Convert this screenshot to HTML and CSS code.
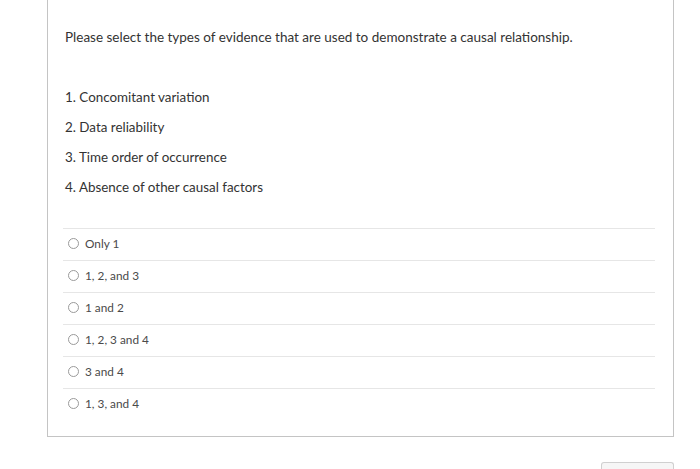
FILE: index.html
```html
<!DOCTYPE html>
<html>
<head>
<meta charset="utf-8">
<link rel="stylesheet" href="styles.css">
</head>
<body>
<div class="panel">
  <p class="question">Please select the types of evidence that are used to demonstrate a causal relationship.</p>
  <ol class="items">
    <li>1. Concomitant variation</li>
    <li>2. Data reliability</li>
    <li>3. Time order of occurrence</li>
    <li>4. Absence of other causal factors</li>
  </ol>
  <div class="options">
    <label class="option"><span class="radio"></span><span>Only 1</span></label>
    <label class="option"><span class="radio"></span><span>1, 2, and 3</span></label>
    <label class="option"><span class="radio"></span><span>1 and 2</span></label>
    <label class="option"><span class="radio"></span><span>1, 2, 3 and 4</span></label>
    <label class="option"><span class="radio"></span><span>3 and 4</span></label>
    <label class="option"><span class="radio"></span><span>1, 3, and 4</span></label>
  </div>
</div>
<div class="footer">
  <div class="btn"></div>
</div>
</body>
</html>
```
FILE: styles.css
```css
html, body {
  margin: 0;
  padding: 0;
  background: #fff;
  font-family: Lato, "Liberation Sans", sans-serif;
  color: #333;
  overflow: hidden;
}
.panel {
  box-sizing: border-box;
  margin-left: 47px;
  width: 627px;
  height: 437px;
  border: 1px solid #c4c4c4;
  border-top: none;
  padding: 28px 17px 0 17px;
}
.question {
  margin: 0;
  font-size: 13.5px;
  line-height: 18px;
  color: #333;
}
.items {
  list-style: none;
  margin: 42px 0 0 0;
  padding: 0;
  font-size: 13.4px;
  line-height: 18px;
  color: #333;
}
.items li {
  margin-bottom: 12px;
}
.options {
  margin: 32px 0 0 -2px;
  width: 592px;
}
.option {
  box-sizing: border-box;
  display: flex;
  align-items: center;
  height: 32px;
  border-top: 1px solid #e6e6e6;
  padding: 0 0 2px 5px;
  font-size: 11.8px;
  color: #4a4a4a;
  gap: 6px;
}
.radio {
  box-sizing: border-box;
  width: 11px;
  height: 11px;
  border: 1px solid #9a9a9a;
  border-radius: 50%;
  background: #fff;
}
.footer {
  display: flex;
  justify-content: flex-end;
  width: 674px;
  margin-top: 25px;
}
.btn {
  width: 71px;
  height: 12px;
  border: 1px solid #d0d0d0;
  border-bottom: none;
  border-radius: 3px 3px 0 0;
  background: #f6f6f6;
}
```
